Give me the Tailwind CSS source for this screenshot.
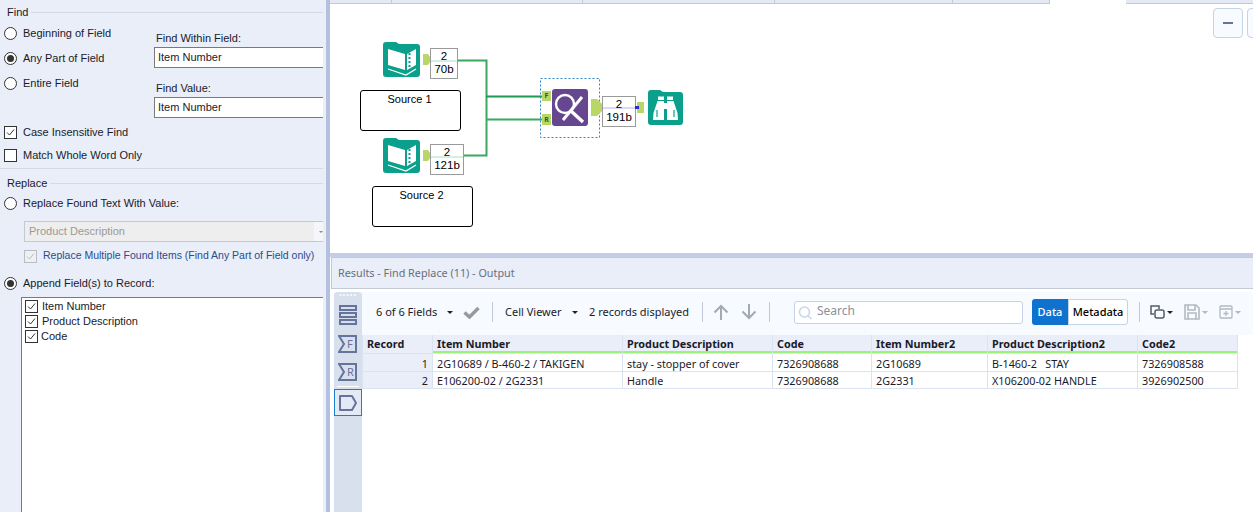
<!DOCTYPE html>
<html lang="en">
<head>
<meta charset="UTF-8">
<title>Find Replace</title>
<script src="https://cdn.jsdelivr.net/npm/@tailwindcss/browser@4"></script>
</head>
<body class="w-[1253px] h-[512px] overflow-hidden bg-white flex font-['Noto_Sans',sans-serif] text-[11px] text-[#1a1a2a]">

<!-- config panel -->
<div class="w-[326px] h-[512px] shrink-0 bg-[#e9eef8] overflow-hidden pr-[3px] font-['Liberation_Sans',sans-serif]">
  <div class="flex items-center h-[14px] mt-[5px] pl-[7px]"><span class="pr-[3px]">Find</span><div class="flex-1 h-px bg-[#d5d9e2]"></div></div>
  <div class="flex h-[88px]">
    <div class="w-[154px] pl-[4px] pt-[2px]">
      <div class="flex items-center gap-[6px] h-[25px]"><span class="w-[13px] h-[13px] rounded-full border border-[#333] bg-white"></span>Beginning of Field</div>
      <div class="flex items-center gap-[6px] h-[25px]"><span class="w-[13px] h-[13px] rounded-full border border-[#333] bg-white flex items-center justify-center"><span class="w-[7px] h-[7px] rounded-full bg-[#333]"></span></span>Any Part of Field</div>
      <div class="flex items-center gap-[6px] h-[25px]"><span class="w-[13px] h-[13px] rounded-full border border-[#333] bg-white"></span>Entire Field</div>
    </div>
    <div class="flex-1 pt-[11px]">
      <div class="pl-[2px] h-[17px] leading-[17px]">Find Within Field:</div>
      <div class="h-[21px] leading-[18px] border border-r-0 border-[#7a7a7a] bg-white pl-[3px]">Item Number</div>
      <div class="pl-[2px] h-[17px] leading-[17px] mt-[12px]">Find Value:</div>
      <div class="h-[21px] leading-[18px] border border-r-0 border-[#7a7a7a] bg-white pl-[3px]">Item Number</div>
    </div>
  </div>
  <div class="pl-[4px] mt-[14px]">
    <div class="flex items-center gap-[6px] h-[23px]">
      <svg width="13" height="13" viewBox="0 0 13 13"><rect x=".5" y=".5" width="12" height="12" fill="#fff" stroke="#333"/><path d="M3 6.5l2.5 2.5L10 3.5" fill="none" stroke="#333"/></svg>
      Case Insensitive Find</div>
    <div class="flex items-center gap-[6px] h-[23px]"><span class="w-[13px] h-[13px] border border-[#333] bg-white"></span>Match Whole Word Only</div>
  </div>
  <div class="h-px bg-[#d5d9e2] mt-[1px]"></div>
  <div class="flex items-center h-[14px] mt-[7px] pl-[7px]"><span class="pr-[3px]">Replace</span><div class="flex-1 h-px bg-[#d5d9e2]"></div></div>
  <div class="flex items-center gap-[6px] h-[25px] pl-[4px] mt-[1px]"><span class="w-[13px] h-[13px] rounded-full border border-[#333] bg-white"></span>Replace Found Text With Value:</div>
  <div class="ml-[24px] mt-[5px] h-[21px] border border-r-0 border-[#c3c8d2] bg-[#f4f6f9] flex">
    <div class="w-[291px] bg-[#eeeeee] pl-[4px] leading-[18px] text-[#9a9a9a]">Product Description</div>
    <span class="ml-[5px] mt-[9px] w-0 h-0 border-x-[2px] border-x-transparent border-t-[2px] border-t-[#8a8a8a]"></span>
  </div>
  <div class="flex items-center gap-[6px] h-[20px] pl-[24px] mt-[4px] text-[10.5px] text-[#2c4a8c] whitespace-nowrap">
    <svg class="shrink-0" width="13" height="13" viewBox="0 0 13 13"><rect x=".5" y=".5" width="12" height="12" fill="#eef0f4" stroke="#b8bcc4"/><path d="M3 6.5l2.5 2.5L10 3.5" fill="none" stroke="#b8bcc4"/></svg>
    Replace Multiple Found Items (Find Any Part of Field only)</div>
  <div class="flex items-center gap-[6px] h-[25px] pl-[4px] mt-[5px]"><span class="w-[13px] h-[13px] rounded-full border border-[#333] bg-white flex items-center justify-center"><span class="w-[7px] h-[7px] rounded-full bg-[#333]"></span></span>Append Field(s) to Record:</div>
  <div class="ml-[21px] mt-[1px] h-[220px] border border-r-0 border-[#7a7a7a] bg-white pl-[3px] pt-[1px]">
    <div class="flex items-center gap-[4px] h-[15px]"><svg width="13" height="13" viewBox="0 0 13 13"><rect x=".5" y=".5" width="12" height="12" fill="#fff" stroke="#333"/><path d="M3 6.5l2.5 2.5L10 3.5" fill="none" stroke="#333"/></svg>Item Number</div>
    <div class="flex items-center gap-[4px] h-[15px]"><svg width="13" height="13" viewBox="0 0 13 13"><rect x=".5" y=".5" width="12" height="12" fill="#fff" stroke="#333"/><path d="M3 6.5l2.5 2.5L10 3.5" fill="none" stroke="#333"/></svg>Product Description</div>
    <div class="flex items-center gap-[3px] h-[15px]"><svg width="13" height="13" viewBox="0 0 13 13"><rect x=".5" y=".5" width="12" height="12" fill="#fff" stroke="#333"/><path d="M3 6.5l2.5 2.5L10 3.5" fill="none" stroke="#333"/></svg>Code</div>
  </div>
</div>
<div class="w-[4px] h-[512px] shrink-0 bg-[#b3c0de]"></div>

<!-- right side -->
<div class="flex-1 min-w-0 flex flex-col">
  <!-- canvas -->
  <div class="relative h-[253px] shrink-0 bg-white overflow-hidden">
    <div class="flex h-[4px] items-start">
      <div class="w-[62px] h-[4px] bg-[#e4e9f6] border-b border-r border-[#c4c9d6]"></div>
      <div class="w-[191px] h-[4px] bg-[#e4e9f6] border-b border-r border-[#c4c9d6]"></div>
      <div class="w-[192px] h-[4px] bg-[#e4e9f6] border-b border-r border-[#c4c9d6]"></div>
      <div class="w-[178px] h-[4px] bg-[#e4e9f6] border-b border-r border-[#c4c9d6]"></div>
      <div class="w-[97px] h-[4px] bg-[#e4e9f6] border-b border-r border-[#c4c9d6]"></div>
      <div class="w-[76px]"></div>
      <div class="flex-1 h-[4px] bg-[#e4e9f6] border-b border-[#c4c9d6]"></div>
    </div>
    <button class="absolute left-[883px] top-[8px] w-[30px] h-[30px] rounded-[4px] border border-[#c5d2e8] bg-[#f7faff] flex items-center justify-center"><span class="w-[10px] h-[2px] bg-[#66739a]"></span></button>
    <button class="absolute left-[917px] top-[8px] w-[30px] h-[30px] rounded-[4px] border border-[#c5d2e8] bg-[#f7faff]"></button>

    <svg class="absolute left-0 top-0" width="923" height="253" viewBox="330 0 923 253" fill="none">
      <path d="M458 60.5H486.5V155.5H464" stroke="#3aa860" stroke-width="2"/>
      <path d="M486 96.5H543" stroke="#1e9a50" stroke-width="2"/>
      <path d="M486 119.5H543" stroke="#3aa860" stroke-width="2"/>
      <rect x="540.5" y="78.5" width="59" height="59" stroke="#2a86d0" stroke-dasharray="2 2"/>
      <!-- input book icons -->
      <g>
        <path d="M386 42h10l3 2h18a3 3 0 0 1 3 3v27a3 3 0 0 1-3 3h-31a3 3 0 0 1-3-3V45a3 3 0 0 1 3-3z" fill="#0aa08c"/>
        <path d="M388 49l17 5v16l-17-5zM407 54l9-5v16l-9 5z" fill="#fff"/>
        <path d="M388 69l18 6 10-6" stroke="#fff" stroke-width="1.3"/>
        <path d="M409.5 53v2M409.5 57v2M409.5 61v2M409.5 65v2" stroke="#0aa08c" stroke-width="2"/>
      </g>
      <g transform="translate(0 96)">
        <path d="M386 42h10l3 2h18a3 3 0 0 1 3 3v27a3 3 0 0 1-3 3h-31a3 3 0 0 1-3-3V45a3 3 0 0 1 3-3z" fill="#0aa08c"/>
        <path d="M388 49l17 5v16l-17-5zM407 54l9-5v16l-9 5z" fill="#fff"/>
        <path d="M388 69l18 6 10-6" stroke="#fff" stroke-width="1.3"/>
        <path d="M409.5 53v2M409.5 57v2M409.5 61v2M409.5 65v2" stroke="#0aa08c" stroke-width="2"/>
      </g>
      <!-- anchors -->
      <path d="M423 54h5l2 3v5l-2 3h-5z" fill="#b8d766"/>
      <path d="M423 150h5l2 3v5l-2 3h-5z" fill="#b8d766"/>
      <path d="M591 99h6l5 5v7l-5 5h-6z" fill="#b8d766"/>
      <rect x="637" y="102" width="7" height="11" fill="#b8d766"/>
      <rect x="542" y="91" width="9" height="10" fill="#b8d766"/>
      <rect x="542" y="114" width="9" height="11" fill="#b8d766"/>
      <!-- find replace tool -->
      <rect x="552" y="89" width="36" height="37" rx="3" fill="#65468f"/>
      <circle cx="565" cy="104" r="9" stroke="#fff" stroke-width="2.4"/>
      <path d="M571 111l12 11" stroke="#fff" stroke-width="3.4"/>
      <path d="M563 120l19-23" stroke="#fff" stroke-width="3"/>
      <!-- browse tool -->
      <path d="M651 90h9l3 2h17a3 3 0 0 1 3 3v27a3 3 0 0 1-3 3h-29a3 3 0 0 1-3-3V93a3 3 0 0 1 3-3z" fill="#0aa08c"/>
      <path d="M658 96.5h6v3.5h-6zM667 96.5h6v3.5h-6zM657.5 101h6.5v2h3v-2h6.5l4 12 .5 7h-11v-11h-3v11h-11l.5-7z" fill="#fff"/>
      <path d="M657 110v7M674 110v7" stroke="#0aa08c" stroke-width="1.2"/>
    </svg>

    <div class="absolute left-[100px] top-[48px] w-[28px] h-[31px] border border-[#9a9a9a] bg-white text-center text-[11.5px] leading-[13px] text-black pt-[1px] font-['Liberation_Sans',sans-serif]"><span class="absolute left-0 right-0 top-[11px] h-[2px] bg-[#d6eedd]"></span><span class="relative">2<br>70b</span></div>
    <div class="absolute left-[100px] top-[144px] w-[34px] h-[31px] border border-[#9a9a9a] bg-white text-center text-[11.5px] leading-[13px] text-black pt-[1px] font-['Liberation_Sans',sans-serif]"><span class="absolute left-0 right-0 top-[11px] h-[2px] bg-[#d6eedd]"></span><span class="relative">2<br>121b</span></div>
    <div class="absolute left-[272px] top-[96px] w-[34px] h-[31px] border border-[#9a9a9a] bg-white text-center text-[11.5px] leading-[13px] text-black pt-[1px] font-['Liberation_Sans',sans-serif]"><span class="absolute left-0 right-0 top-[10px] h-[2px] bg-[#d8d8fa]"></span><span class="relative">2<br>191b</span></div>
    <span class="absolute left-[305px] top-[106px] w-[4px] h-[3px] bg-[#2a2ad0]"></span>
    <div class="absolute left-[30px] top-[90px] w-[101px] h-[41px] border border-black rounded-[3px] bg-white text-center leading-[16px] pr-[2px] text-black font-['Liberation_Sans',sans-serif]">Source 1</div>
    <div class="absolute left-[42px] top-[186px] w-[101px] h-[41px] border border-black rounded-[3px] bg-white text-center leading-[16px] pr-[2px] text-black font-['Liberation_Sans',sans-serif]">Source 2</div>
    <span class="absolute left-[212px] top-[92px] w-[9px] text-center text-[7px] leading-[8px] font-bold text-[#1f5f3a]">F</span>
    <span class="absolute left-[212px] top-[116px] w-[9px] text-center text-[7px] leading-[8px] font-bold text-[#1f5f3a]">R</span>
  </div>

  <!-- results -->
  <div class="h-[4px] shrink-0 bg-[#c4cfe6]"></div>
  <div class="h-[32px] shrink-0 bg-[#e9eef8] border border-r-0 border-[#c4c9d6] ml-px px-[6px] leading-[30px] text-[10.8px] text-[#6a6f7c]">Results - Find Replace (11) - Output</div>
  <div class="flex-1 flex min-h-0 pl-[4px] pt-[3px]">
    <!-- side strip -->
    <div class="w-[28px] shrink-0 bg-[#d8e0ee] rounded-t-[3px] flex flex-col items-center">
      <div class="text-[#fff] leading-[8px] text-[7px] tracking-[1px] h-[9px]">•••••</div>
      <svg class="mt-[4px]" width="18" height="20" viewBox="0 0 18 20" fill="none" stroke="#66739a" stroke-width="2"><rect x="1" y="1" width="16" height="4"/><rect x="1" y="8" width="16" height="4"/><rect x="1" y="15" width="16" height="4"/></svg>
      <svg class="mt-[9px]" width="20" height="20" viewBox="0 0 20 20" fill="none" stroke="#66739a" stroke-width="2"><path d="M1 2h17v16H1l5-8z"/><text x="9" y="14" font-size="11" fill="#66739a" stroke="none">F</text></svg>
      <svg class="mt-[8px]" width="20" height="20" viewBox="0 0 20 20" fill="none" stroke="#66739a" stroke-width="2"><path d="M1 2h17v16H1l5-8z"/><text x="9" y="14" font-size="11" fill="#66739a" stroke="none">R</text></svg>
      <div class="w-[22px] h-px bg-white mt-[4px]"></div>
      <div class="w-[28px] h-[27px] mt-[2px] border border-[#1c7ed0] bg-[#e4eaf5] flex items-center justify-center">
        <svg width="20" height="16" viewBox="0 0 20 16" fill="none" stroke="#66739a" stroke-width="2"><path d="M2 1h12l4 7-4 7H2z" stroke-linejoin="round"/></svg>
      </div>
    </div>
    <!-- grid area -->
    <div class="flex-1 min-w-0 flex flex-col">
      <div class="h-[43px] shrink-0 bg-[#f7faff] flex items-center pl-[14px] pb-[3px] whitespace-nowrap">
        <span class="w-[62px]">6 of 6 Fields</span>
        <span class="ml-[9px] w-0 h-0 border-x-[3px] border-x-transparent border-t-[3px] border-t-[#222]"></span>
        <svg class="ml-[10px]" width="17" height="13" viewBox="0 0 17 13" fill="none" stroke="#9a9a9a" stroke-width="3.5"><path d="M1.5 6.5l5 4.5L15.5 2"/></svg>
        <span class="ml-[12px] w-px h-[20px] bg-[#c4c9d6]"></span>
        <span class="ml-[12px] w-[60px]">Cell Viewer</span>
        <span class="ml-[7px] w-0 h-0 border-x-[3px] border-x-transparent border-t-[3px] border-t-[#222]"></span>
        <span class="ml-[11px] w-[102px]">2 records displayed</span>
        <span class="ml-[11px] w-px h-[20px] bg-[#c4c9d6]"></span>
        <svg class="ml-[10px]" width="16" height="16" viewBox="0 0 16 16" fill="none" stroke="#a4a9b2" stroke-width="2"><path d="M8 16V2M1.5 8.5L8 2l6.5 6.5"/></svg>
        <svg class="ml-[12px]" width="16" height="16" viewBox="0 0 16 16" fill="none" stroke="#a4a9b2" stroke-width="2"><path d="M8 0v14M1.5 7.5L8 14l6.5-6.5"/></svg>
        <span class="ml-[12px] w-px h-[20px] bg-[#c4c9d6]"></span>
        <div class="ml-[24px] w-[229px] h-[23px] border border-[#c5d2e8] rounded-[3px] bg-white flex items-center pl-[3px] text-[#8a8f9a] text-[12px]">
          <svg width="15" height="15" viewBox="0 0 15 15" fill="none" stroke="#c8d6ea" stroke-width="1.5"><circle cx="6.5" cy="7" r="5"/><path d="M10 11l3.5 3"/></svg>
          <span class="ml-[4px] -mt-[3px]">Search</span>
        </div>
        <div class="ml-[9px] w-[36px] h-[26px] bg-[#0f72cf] text-white rounded-l-[3px] flex items-center justify-center font-medium">Data</div>
        <div class="w-[60px] h-[26px] bg-white border border-[#c5d2e8] rounded-r-[3px] text-black flex items-center justify-center font-medium">Metadata</div>
        <span class="ml-[11px] w-px h-[20px] bg-[#c4c9d6]"></span>
        <svg class="ml-[10px]" width="15" height="14" viewBox="0 0 15 14" fill="none" stroke="#555b68" stroke-width="1.5"><path d="M9 4V1H1v8h3"/><rect x="5" y="5" width="9" height="8" rx="2"/></svg>
        <span class="ml-[2px] w-0 h-0 border-x-[3px] border-x-transparent border-t-[3px] border-t-[#222]"></span>
        <svg class="ml-[11px]" width="16" height="16" viewBox="0 0 16 16" fill="none" stroke="#b4b8c0" stroke-width="1.6"><path d="M1 1h11l3 3v11H1zM4 1v5h7V1M4 15V9h8v6"/></svg>
        <span class="ml-[2px] w-0 h-0 border-x-[3px] border-x-transparent border-t-[3px] border-t-[#b4b8c0]"></span>
        <svg class="ml-[11px]" width="14" height="14" viewBox="0 0 14 14" fill="none" stroke="#b4b8c0" stroke-width="1.3"><rect x="1" y="1" width="12" height="12" rx="1"/><path d="M1 4h12M7 6v5M4.5 8.5h5"/></svg>
        <span class="ml-[2px] w-0 h-0 border-x-[3px] border-x-transparent border-t-[3px] border-t-[#b4b8c0]"></span>
      </div>
      <div class="grid grid-cols-[69px_189px_149px_98px_115px_149px_99px] gap-px w-[876px] h-[54px] grid-rows-[18px_17px_16px] bg-[#dbe3f0] border-x border-b border-[#dbe3f0] text-[10.8px] [&>div]:px-[4px] [&>div]:whitespace-nowrap [&>div]:overflow-hidden">
        <div class="bg-[#e9eef8] font-bold leading-[18px]">Record</div>
        <div class="bg-[#e9eef8] font-bold leading-[18px] border-b-2 border-[#9cf27a]">Item Number</div>
        <div class="bg-[#e9eef8] font-bold leading-[18px] border-b-2 border-[#9cf27a]">Product Description</div>
        <div class="bg-[#e9eef8] font-bold leading-[18px] border-b-2 border-[#9cf27a]">Code</div>
        <div class="bg-[#e9eef8] font-bold leading-[18px] border-b-2 border-[#9cf27a]">Item Number2</div>
        <div class="bg-[#e9eef8] font-bold leading-[18px] border-b-2 border-[#9cf27a]">Product Description2</div>
        <div class="bg-[#e9eef8] font-bold leading-[18px] border-b-2 border-[#9cf27a]">Code2</div>
        <div class="bg-[#e9eef8] text-right leading-[19px]">1</div>
        <div class="bg-white leading-[19px]">2G10689 / B-460-2 / TAKIGEN</div>
        <div class="bg-white leading-[19px]">stay - stopper of cover</div>
        <div class="bg-white leading-[19px]">7326908688</div>
        <div class="bg-white leading-[19px]">2G10689</div>
        <div class="bg-white leading-[19px]">B-1460-2&nbsp;&nbsp; STAY</div>
        <div class="bg-white leading-[19px]">7326908588</div>
        <div class="bg-[#e9eef8] text-right leading-[18px]">2</div>
        <div class="bg-white leading-[18px]">E106200-02 / 2G2331</div>
        <div class="bg-white leading-[18px]">Handle</div>
        <div class="bg-white leading-[18px]">7326908688</div>
        <div class="bg-white leading-[18px]">2G2331</div>
        <div class="bg-white leading-[18px]">X106200-02 HANDLE</div>
        <div class="bg-white leading-[18px]">3926902500</div>
      </div>
    </div>
  </div>
</div>
</body>
</html>
